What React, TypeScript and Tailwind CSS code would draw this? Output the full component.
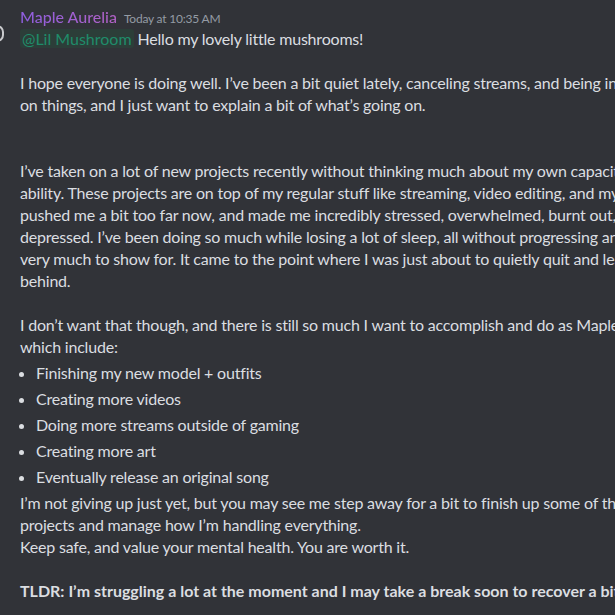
import React from "react";

const font = { fontFamily: "Lato, 'Noto Sans', sans-serif" };

const intro = [
  "I hope everyone is doing well. I’ve been a bit quiet lately, canceling streams, and being inconsistent",
  "on things, and I just want to explain a bit of what’s going on.",
];

const projects = [
  "I’ve taken on a lot of new projects recently without thinking much about my own capacity and",
  "ability. These projects are on top of my regular stuff like streaming, video editing, and my job. It has",
  "pushed me a bit too far now, and made me incredibly stressed, overwhelmed, burnt out, and",
  "depressed. I’ve been doing so much while losing a lot of sleep, all without progressing and having",
  "very much to show for. It came to the point where I was just about to quietly quit and leave it all",
  "behind.",
];

const goals = [
  "Finishing my new model + outfits",
  "Creating more videos",
  "Doing more streams outside of gaming",
  "Creating more art",
  "Eventually release an original song",
];

function Line({ children }: { children: React.ReactNode }) {
  return <div className="whitespace-nowrap h-[22px] leading-[22px]">{children}</div>;
}

function Blank() {
  return <div className="h-[22px]" />;
}

export default function App() {
  return (
    <div
      className="relative w-[615px] h-[615px] overflow-hidden bg-[#313338] text-[#dbdee1] text-[16px]"
      style={font}
    >
      {/* avatar edge peeking in from the left */}
      <div className="absolute -left-[10px] top-[25px] h-[17px] w-[14px] rounded-full border-2 border-[#c9cacd]" />

      <div className="pl-[20px] pt-[6px]">
        <div className="flex items-baseline h-[22px] leading-[22px] whitespace-nowrap">
          <span className="font-medium bg-gradient-to-r from-[#8f5ee0] to-[#b061c4] bg-clip-text text-transparent">
            Maple Aurelia
          </span>
          <span className="ml-[7px] text-[12px] tracking-[-0.2px] text-[#949ba4]">Today at 10:35 AM</span>
        </div>

        <div className="tracking-[-0.2px]">
          <Line>
            <span className="rounded-[3px] bg-[#2c3e39] px-[2px] tracking-normal text-[#1f8c6a]">@Lil Mushroom</span>{" "}
            Hello my lovely little mushrooms!
          </Line>
          <Blank />
          {intro.map((l) => (
            <Line key={l}>{l}</Line>
          ))}
          <Blank />
          <Blank />
          {projects.map((l) => (
            <Line key={l}>{l}</Line>
          ))}
          <Blank />
          <Line>I don’t want that though, and there is still so much I want to accomplish and do as Maple Aurelia,</Line>
          <Line>which include:</Line>

          <ul className="mb-1 list-disc pl-[16px]">
            {goals.map((g) => (
              <li key={g} className="mt-1 h-[22px] leading-[22px] whitespace-nowrap marker:text-[#dbdee1]">
                {g}
              </li>
            ))}
          </ul>

          <Line>I’m not giving up just yet, but you may see me step away for a bit to finish up some of these</Line>
          <Line>projects and manage how I’m handling everything.</Line>
          <Line>Keep safe, and value your mental health. You are worth it.</Line>
          <Blank />
          <Line>
            <span className="font-bold tracking-normal">
              TLDR: I’m struggling a lot at the moment and I may take a break soon to recover a bit.
            </span>
          </Line>
        </div>
      </div>
    </div>
  );
}
